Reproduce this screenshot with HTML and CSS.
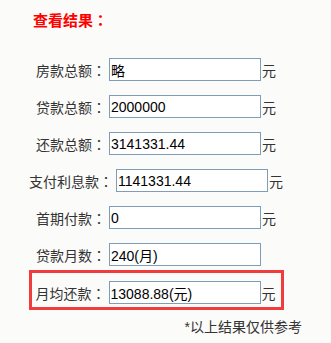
FILE: index.html
```html
<!DOCTYPE html>
<html lang="zh-CN">

<head>
    <meta charset="UTF-8">
    <meta name="viewport" content="width=device-width, initial-scale=1.0">
    <title>查看结果</title>
    <link rel="stylesheet" href="styles.css">
</head>

<body>
    <div class="result">
        <h2 class="result-title">查看结果<span class="colon" lang="ja">：</span></h2>

        <div class="row">
            <label>房款总额<span class="colon" lang="ja">：</span></label>
            <input type="text" value="略">
            <span class="unit">元</span>
        </div>
        <div class="row">
            <label>贷款总额<span class="colon" lang="ja">：</span></label>
            <input type="text" value="2000000">
            <span class="unit">元</span>
        </div>
        <div class="row">
            <label>还款总额<span class="colon" lang="ja">：</span></label>
            <input type="text" value="3141331.44">
            <span class="unit">元</span>
        </div>
        <div class="row">
            <label>支付利息款<span class="colon" lang="ja">：</span></label>
            <input type="text" value="1141331.44">
            <span class="unit">元</span>
        </div>
        <div class="row">
            <label>首期付款<span class="colon" lang="ja">：</span></label>
            <input type="text" value="0">
            <span class="unit">元</span>
        </div>
        <div class="row">
            <label>贷款月数<span class="colon" lang="ja">：</span></label>
            <input type="text" value="240(月)">
            <span class="unit"></span>
        </div>

        <div class="highlight">
            <div class="row">
                <label>月均还款<span class="colon" lang="ja">：</span></label>
                <input type="text" value="13088.88(元)">
                <span class="unit">元</span>
            </div>
        </div>

        <p class="note">*以上结果仅供参考</p>
    </div>
</body>

</html>
```

FILE: styles.css
```css
body {
    margin: 0;
    padding: 0;
    background-color: #fbfbf9;
    font-family: 'Liberation Sans', 'Noto Sans CJK SC', sans-serif;
    color: #333333;
}

.result {
    width: 312px;
    display: flex;
    flex-direction: column;
    align-items: center;
}

.result-title {
    align-self: flex-start;
    margin: 10px 0 0 33px;
    font-size: 15px;
    line-height: 20px;
    font-weight: bold;
    color: #ff0000;
}

/* centred full-width colon, like the old SimSun look */
.colon {
    font-family: 'Noto Sans CJK JP', sans-serif;
}

.row {
    display: flex;
    align-items: center;
    height: 23px;
    margin-top: 14px;
    font-size: 14px;
}

.result-title + .row {
    margin-top: 27px;
}

.row label {
    margin-right: 3px;
    white-space: nowrap;
}

.row input {
    box-sizing: border-box;
    width: 152px;
    height: 23px;
    margin: 0;
    padding: 0 1px;
    border: 1px solid #7f9db9;
    background-color: #ffffff;
    font-family: 'Liberation Sans', 'Noto Sans CJK SC', sans-serif;
    font-size: 14px;
    color: #000000;
    outline: none;
}

.unit {
    width: 14px;
    margin-left: 1px;
}

.highlight {
    margin-top: 4px;
    padding: 8px 5px 3px 4px;
    border: 3px solid #f03c3c;
}

.highlight .row {
    margin-top: 0;
}

.note {
    align-self: flex-end;
    margin: 9px 10px 0 0;
    font-size: 14px;
    line-height: 16px;
    color: #333333;
}
```
